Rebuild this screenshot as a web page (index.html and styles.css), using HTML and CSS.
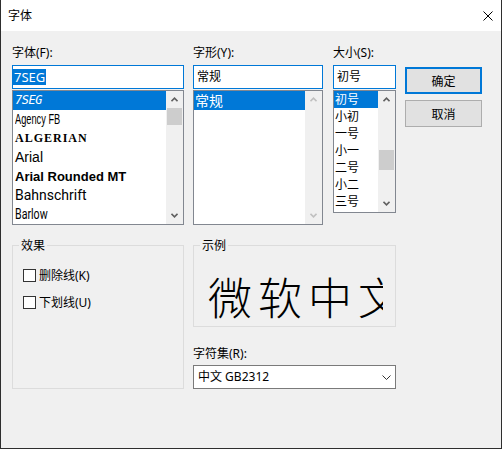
FILE: index.html
```html
<!DOCTYPE html>
<html lang="zh-CN">
<head>
<meta charset="utf-8">
<title>字体</title>
<link rel="stylesheet" href="styles.css">
</head>
<body>
<div class="window">
  <div class="titlebar">
    <span class="title">字体</span>
    <svg class="close" width="10" height="10" viewBox="0 0 10 10"><path d="M0.5 0.5 L9.5 9.5 M9.5 0.5 L0.5 9.5" stroke="#000" stroke-width="1" fill="none"/></svg>
  </div>
  <div class="content">
    <div class="top">
      <div class="col col-font">
        <div class="label">字体(F):</div>
        <div class="input input-font"><span class="sel-text">7SEG</span></div>
        <div class="list list-font">
          <div class="items">
            <div class="item sel f-7seg">7SEG</div>
            <div class="item"><span class="f-agency">Agency FB</span></div>
            <div class="item f-alg">ALGERIAN</div>
            <div class="item f-arial">Arial</div>
            <div class="item f-arialr">Arial Rounded MT</div>
            <div class="item f-bahn">Bahnschrift</div>
            <div class="item"><span class="f-barlow">Barlow</span></div>
          </div>
          <div class="scrollbar">
            <div class="sb-btn"><svg width="7" height="5" viewBox="0 0 7 5"><polyline points="0.5,4.2 3.5,1.2 6.5,4.2" class="chev"/></svg></div>
            <div class="sb-track"><div class="thumb thumb-font"></div></div>
            <div class="sb-btn"><svg width="7" height="5" viewBox="0 0 7 5"><polyline points="0.5,0.8 3.5,3.8 6.5,0.8" class="chev"/></svg></div>
          </div>
        </div>
      </div>
      <div class="col col-style">
        <div class="label">字形(Y):</div>
        <div class="input input-plain">常规</div>
        <div class="list list-style">
          <div class="items">
            <div class="item sel item-style">常规</div>
          </div>
          <div class="scrollbar">
            <div class="sb-btn"><svg width="7" height="5" viewBox="0 0 7 5"><polyline points="0.5,4.2 3.5,1.2 6.5,4.2" class="chev chev-dis"/></svg></div>
            <div class="sb-track"></div>
            <div class="sb-btn"><svg width="7" height="5" viewBox="0 0 7 5"><polyline points="0.5,0.8 3.5,3.8 6.5,0.8" class="chev chev-dis"/></svg></div>
          </div>
        </div>
      </div>
      <div class="col col-size">
        <div class="label">大小(S):</div>
        <div class="input input-plain">初号</div>
        <div class="list list-size">
          <div class="items">
            <div class="item sel item-size">初号</div>
            <div class="item item-size">小初</div>
            <div class="item item-size">一号</div>
            <div class="item item-size">小一</div>
            <div class="item item-size">二号</div>
            <div class="item item-size">小二</div>
            <div class="item item-size">三号</div>
          </div>
          <div class="scrollbar">
            <div class="sb-btn"><svg width="7" height="5" viewBox="0 0 7 5"><polyline points="0.5,4.2 3.5,1.2 6.5,4.2" class="chev"/></svg></div>
            <div class="sb-track"><div class="thumb thumb-size"></div></div>
            <div class="sb-btn"><svg width="7" height="5" viewBox="0 0 7 5"><polyline points="0.5,0.8 3.5,3.8 6.5,0.8" class="chev"/></svg></div>
          </div>
        </div>
      </div>
      <div class="col col-btns">
        <div class="btn btn-default">确定</div>
        <div class="btn">取消</div>
      </div>
    </div>
    <div class="bottom">
      <fieldset class="group group-effects">
        <legend>效果</legend>
        <div class="group-body effects-body">
          <div class="check-row"><span class="checkbox"></span><span>删除线(K)</span></div>
          <div class="check-row row2"><span class="checkbox"></span><span>下划线(U)</span></div>
        </div>
      </fieldset>
      <div class="right-col">
        <fieldset class="group group-sample">
          <legend>示例</legend>
          <div class="group-body sample-body"><div class="sample-clip">微软中文</div></div>
        </fieldset>
        <div class="label charset-label">字符集(R):</div>
        <div class="select">
          <span>中文 GB2312</span>
          <svg width="9" height="5" viewBox="0 0 9 5"><polyline points="0.5,0.5 4.5,4.5 8.5,0.5" fill="none" stroke="#333" stroke-width="1"/></svg>
        </div>
      </div>
    </div>
  </div>
</div>
</body>
</html>
```
FILE: styles.css
```css
* { box-sizing: border-box; }
html, body { margin: 0; padding: 0; }
body {
  width: 502px;
  height: 449px;
  overflow: hidden;
  font-family: "Noto Sans", "Noto Sans CJK SC", sans-serif;
  font-size: 12px;
  color: #000;
  background: #f0f0f0;
}
.window {
  width: 502px;
  height: 449px;
  border: 1px solid #2e2e2e;
  border-top: none;
  background: #f0f0f0;
  display: flex;
  flex-direction: column;
}
.titlebar {
  height: 31px;
  flex: none;
  background: #fff;
  display: flex;
  align-items: center;
  justify-content: space-between;
  padding: 0 8px 0 7px;
}
.title { line-height: 15px; }
.close { display: block; }

.content { padding: 14px 0 0 11px; }
.top { display: flex; align-items: flex-start; }
.col-font { width: 172px; margin-right: 9px; }
.col-style { width: 130px; margin-right: 10px; }
.col-size { width: 63px; margin-right: 9px; }
.col-btns {
  width: 77px;
  padding-top: 22px;
  display: flex;
  flex-direction: column;
  gap: 6px;
}
.label {
  height: 15px;
  line-height: 15px;
  margin-bottom: 5px;
  white-space: nowrap;
}
.input {
  height: 24px;
  background: #fff;
  border: 1px solid #0078d7;
  display: flex;
  align-items: center;
  white-space: nowrap;
  overflow: hidden;
}
.input-plain { padding-left: 3px; line-height: 16px; }
.sel-text {
  background: #0078d7;
  color: #fff;
  line-height: 16px;
  padding: 0 1px;
  font-size: 13px;
}
.list {
  margin-top: 1px;
  height: 135px;
  border: 1px solid #828790;
  background: #fff;
  display: flex;
}
.list-size { height: 123px; }
.items { flex: 1; min-width: 0; overflow: hidden; }
.item {
  height: 19px;
  line-height: 19px;
  padding-left: 2px;
  white-space: nowrap;
  overflow: hidden;
}
.item.sel { background: #0078d7; color: #fff; }
.item-style { font-size: 14px; padding-left: 1px; }
.item-size { height: 17px; line-height: 17px; padding-left: 1px; }

.f-7seg {
  font-family: "DejaVu Sans Mono", monospace;
  font-style: oblique;
  font-size: 12px;
  letter-spacing: -0.5px;
}
.f-agency {
  display: inline-block;
  font-family: "Liberation Sans", sans-serif;
  font-size: 14px;
  transform: scaleX(0.66);
  transform-origin: left center;
}
.f-alg {
  font-family: "Liberation Serif", serif;
  font-weight: bold;
  font-size: 12px;
  letter-spacing: 1px;
}
.f-arial { font-family: "Liberation Sans", sans-serif; font-size: 14px; }
.f-arialr { font-family: "Liberation Sans", sans-serif; font-weight: bold; font-size: 13px; }
.f-bahn { font-family: Roboto, sans-serif; font-size: 14px; }
.f-barlow {
  display: inline-block;
  font-family: Roboto, sans-serif;
  font-size: 14px;
  transform: scaleX(0.76);
  transform-origin: left center;
}

.scrollbar {
  width: 17px;
  flex: none;
  background: #f0f0f0;
  display: flex;
  flex-direction: column;
}
.sb-btn {
  height: 17px;
  flex: none;
  display: flex;
  align-items: center;
  justify-content: center;
}
.sb-btn svg { display: block; }
.sb-track { flex: 1; }
.chev { fill: none; stroke: #606060; stroke-width: 1.6; }
.chev-dis { stroke: #c0c0c0; }
.thumb { background: #cdcdcd; margin: 0 auto; width: 15px; }
.thumb-font { height: 17px; }
.thumb-size { height: 20px; margin-top: 42px; }

.btn {
  height: 27px;
  background: #e1e1e1;
  border: 1px solid #adadad;
  display: flex;
  align-items: center;
  justify-content: center;
}
.btn-default { border: 2px solid #0078d7; }

.bottom { display: flex; margin-top: 13px; align-items: flex-start; }
.group {
  margin: 0;
  padding: 0;
  border: 1px solid #dcdcdc;
  min-width: 0;
}
.group legend {
  padding: 0 2px;
  margin-left: 6px;
  line-height: 15px;
  height: 15px;
}
.group-effects { width: 172px; margin-right: 9px; }
.effects-body { height: 135px; padding: 15px 0 0 10px; }
.check-row {
  display: flex;
  align-items: center;
  height: 15px;
  line-height: 15px;
  gap: 3px;
}
.row2 { margin-top: 12px; }
.checkbox {
  width: 13px;
  height: 13px;
  border: 1px solid #333;
  background: #fff;
  flex: none;
}
.right-col { width: 203px; }
.group-sample { width: 203px; }
.sample-body {
  height: 73px;
  padding: 20px 12px 0 14px;
}
.sample-clip {
  font-family: "Noto Sans CJK SC", sans-serif;
  font-size: 44px;
  line-height: 46px;
  letter-spacing: 6px;
  white-space: nowrap;
  overflow: hidden;
  font-weight: 300;
}
.charset-label { margin-top: 19px; margin-bottom: 4px; }
.select {
  height: 24px;
  border: 1px solid #7a7a7a;
  background: #fff;
  display: flex;
  align-items: center;
  justify-content: space-between;
  padding: 0 4px 0 4px;
  line-height: 16px;
}
.select svg { display: block; }
```
